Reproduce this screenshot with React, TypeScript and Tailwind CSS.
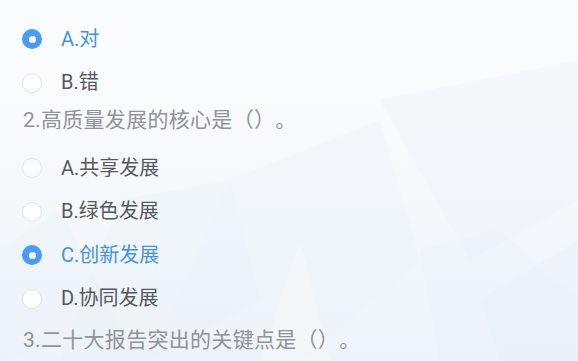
import React from "react";

type Opt = { label: string; selected?: boolean };

function Radio({ selected }: { selected?: boolean }) {
  return selected ? (
    <div className="w-[20px] h-[20px] rounded-full bg-[#4a9bf3] flex items-center justify-center shrink-0">
      <div className="w-[7px] h-[7px] rounded-full bg-white" />
    </div>
  ) : (
    <div className="w-[20px] h-[20px] rounded-full bg-white border border-[#e1e3e6] shrink-0" />
  );
}

function Option({ label, selected }: Opt) {
  return (
    <div className="h-[43.5px] flex items-center">
      <div className="ml-[-1px] mt-[1px]">
        <Radio selected={selected} />
      </div>
      <span
        className={`ml-[19px] text-[20px] leading-none ${
          selected ? "text-[#4593e0]" : "text-[#55595e]"
        }`}
      >
        {label}
      </span>
    </div>
  );
}

function Question({ text, extra }: { text: string; extra?: string }) {
  return (
    <div
      className={`h-[30px] flex items-center text-[21px] tracking-[0.3px] leading-none text-[#909398] [text-spacing-trim:space-all] ${extra ?? ""}`}
    >
      {text}
    </div>
  );
}

export default function App() {
  return (
    <div
      className="relative w-[578px] h-[361px] overflow-hidden bg-gradient-to-b from-[#fbfcfd] via-[#f6f9fc] to-[#eef4f9]"
      style={{ fontFamily: 'Roboto, "Noto Sans CJK SC", sans-serif' }}
    >
      <svg className="absolute inset-0 w-full h-full" viewBox="0 0 578 361" preserveAspectRatio="none">
        <polygon points="0,250 60,210 120,330 0,361" fill="#e6eef7" opacity="0.25" />
        <polygon points="120,200 230,180 260,300 150,361 60,361" fill="#e8eff8" opacity="0.25" />
        <polygon points="230,180 380,120 420,260 300,361 150,361" fill="#ecf2f9" opacity="0.3" />
        <polygon points="380,100 578,60 578,200 470,260" fill="#ebf1f9" opacity="0.25" />
        <polygon points="420,250 500,230 578,300 578,361 440,361" fill="#e6eef7" opacity="0.25" />
        <polygon points="300,240 330,361 260,361" fill="#f7f9fc" opacity="0.5" />
        <polygon points="480,300 578,240 578,361 500,361" fill="#e3ecf6" opacity="0.2" />
      </svg>
      <div className="relative pl-[23px] pt-[17px]">
        <Option label="A.对" selected />
        <Option label="B.错" />
        <Question text="2.高质量发展的核心是（）。" extra="mt-[1px] mb-[11px]" />
        <Option label="A.共享发展" />
        <Option label="B.绿色发展" />
        <Option label="C.创新发展" selected />
        <Option label="D.协同发展" />
        <Question text="3.二十大报告突出的关键点是（）。" extra="mt-[5px]" />
      </div>
    </div>
  );
}
